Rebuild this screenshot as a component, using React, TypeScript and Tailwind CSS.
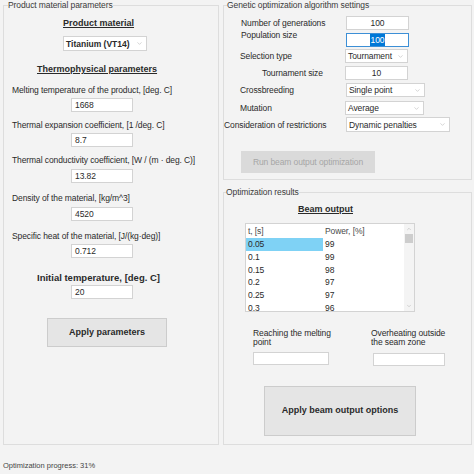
import { ChevronDown, ChevronUp } from "lucide-react";

const txt = "text-[8.5px] leading-[12px] tracking-[-0.1px]";
const boxCls = "bg-white border border-[#d3d3d3]";

function Select({ value, className = "", bold = false }: { value: string; className?: string; bold?: boolean }) {
  return (
    <div className={`flex items-center justify-between pl-[2px] pr-[3px] ${boxCls} ${className}`}>
      <span className={bold ? "whitespace-nowrap text-[8.5px] font-bold leading-[12px]" : `whitespace-nowrap ${txt}`}>{value}</span>
      <ChevronDown size={7} strokeWidth={1.5} className="shrink-0 text-[#a0a0a0]" />
    </div>
  );
}

function LeftField({ label, value, labelMt, inputMt }: { label: string; value: string; labelMt: string; inputMt: string }) {
  return (
    <>
      <div className={`ml-[8px] h-[12px] ${txt} ${labelMt}`}>{label}</div>
      <div className={`ml-[67px] h-[14px] w-[62px] pl-[3px] ${boxCls} ${txt} ${inputMt}`}>{value}</div>
    </>
  );
}

function Row({ label, pl, mt, children, h = "h-[14px]", labelUp = false }: { label: string; pl: string; mt: string; children: React.ReactNode; h?: string; labelUp?: boolean }) {
  return (
    <div className={`flex ${labelUp ? "items-start" : "items-center"} ${h} ${mt}`}>
      <div className={`w-[121px] shrink-0 whitespace-nowrap ${pl} ${txt} ${labelUp ? "-mt-[4px]" : ""}`}>{label}</div>
      {children}
    </div>
  );
}

const rows = [
  ["0.05", "99"],
  ["0.1", "99"],
  ["0.15", "98"],
  ["0.2", "97"],
  ["0.25", "97"],
  ["0.3", "96"],
];

export default function App() {
  return (
    <div className="flex h-[474px] w-[474px] flex-col overflow-hidden bg-[#f3f3f3] font-['Liberation_Sans',Arial,sans-serif] text-[#2a2a2a]">
      <div className="flex h-[445px]">
        {/* Product material parameters */}
        <fieldset className="ml-[3px] h-full w-[216px] border border-[#dddddd]">
          <legend className="ml-[4px] text-[8.5px] leading-[11px] tracking-[-0.1px] text-[#3a3a3a]">Product material parameters</legend>
          <div className="ml-[59px] mt-[6px] h-[12px] text-[9px] font-bold leading-[12px] underline">Product material</div>
          <Select value="Titanium (VT14)" bold className="ml-[59px] mt-[7px] h-[15px] w-[84px]" />
          <div className="ml-[33px] mt-[12px] h-[12px] text-[9px] font-bold leading-[12px] underline">Thermophysical parameters</div>
          <LeftField label="Melting temperature of the product, [deg. C]" value="1668" labelMt="mt-[9px]" inputMt="mt-[2px]" />
          <LeftField label="Thermal expansion coefficient, [1 /deg. C]" value="8.7" labelMt="mt-[7px]" inputMt="mt-[2px]" />
          <LeftField label="Thermal conductivity coefficient, [W / (m · deg. C)]" value="13.82" labelMt="mt-[7px]" inputMt="mt-[3px]" />
          <LeftField label="Density of the material, [kg/m^3]" value="4520" labelMt="mt-[9px]" inputMt="mt-[3px]" />
          <LeftField label="Specific heat of the material, [J/(kg·deg)]" value="0.712" labelMt="mt-[9px]" inputMt="mt-[2px]" />
          <div className="ml-[33px] mt-[13px] h-[14px] text-[9.5px] font-bold leading-[14px]">Initial temperature, [deg. C]</div>
          <div className={`ml-[67px] h-[14px] w-[62px] pl-[3px] ${boxCls} ${txt}`}>20</div>
          <button className="ml-[43px] mt-[19px] flex h-[29px] w-[120px] items-center justify-center border border-[#cccccc] bg-[#e5e5e5] text-[9px] font-bold">
            Apply parameters
          </button>
        </fieldset>

        <div className="ml-[4px] flex w-[249px] flex-col">
          {/* Genetic optimization algorithm settings */}
          <fieldset className="h-[180px] border border-[#dddddd]">
            <legend className="ml-[3px] text-[8.5px] leading-[11px] tracking-[-0.1px] text-[#3a3a3a]">Genetic optimization algorithm settings</legend>
            <Row label="Number of generations" pl="pl-[17px]" mt="mt-[5px]">
              <div className={`ml-[1px] h-[14px] w-[63px] text-center ${boxCls} ${txt}`}>100</div>
            </Row>
            <Row label="Population size" pl="pl-[17px]" mt="mt-[3px]" labelUp>
              <div className="ml-[1px] flex h-[14px] w-[63px] items-center justify-center border border-[#3c8fd6] bg-white">
                <span className={`bg-[#0078d7] px-[1px] text-white ${txt} leading-[10px]`}>100</span>
              </div>
            </Row>
            <Row label="Selection type" pl="pl-[16px]" mt="mt-[2px]">
              <Select value="Tournament" className="h-[14px] w-[63px]" />
            </Row>
            <Row label="Tournament size" pl="pl-[38px]" mt="mt-[3px]">
              <div className={`h-[14px] w-[63px] text-center ${boxCls} ${txt}`}>10</div>
            </Row>
            <Row label="Crossbreeding" pl="pl-[16px]" mt="mt-[3px]">
              <Select value="Single point" className="ml-[1px] h-[14px] w-[79px]" />
            </Row>
            <Row label="Mutation" pl="pl-[16px]" mt="mt-[4px]">
              <Select value="Average" className="h-[14px] w-[79px]" />
            </Row>
            <Row label="Consideration of restrictions" pl="pl-0" mt="mt-[2px]" h="h-[15px]">
              <Select value="Dynamic penalties" className="ml-[1px] h-[15px] w-[104px]" />
            </Row>
            <button className={`ml-[17px] mt-[19px] flex h-[22px] w-[134px] items-center justify-center bg-[#dadada] text-[#a6a6a6] ${txt}`}>
              Run beam output optimization
            </button>
          </fieldset>

          {/* Optimization results */}
          <fieldset className="mt-[7px] flex-1 border border-[#dddddd]">
            <legend className="ml-[2px] text-[8.5px] leading-[11px] tracking-[-0.1px] text-[#3a3a3a]">Optimization results</legend>
            <div className="ml-[74px] mt-[5px] h-[12px] text-[9px] font-bold leading-[12px] underline">Beam output</div>
            <div className={`ml-[21px] mt-[8px] flex h-[89px] w-[170px] overflow-hidden ${boxCls}`}>
              <div className="flex-1">
                <div className={`flex h-[14px] items-center text-[#4a4a4a] ${txt}`}>
                  <div className="w-[77px] pl-[2px]">t, [s]</div>
                  <div className="pl-[2px]">Power, [%]</div>
                </div>
                {rows.map(([t, p], i) => (
                  <div key={t} className={`flex h-[12.8px] items-center ${txt}`}>
                    <div className={`h-full w-[77px] pl-[2px] leading-[12.8px] ${i === 0 ? "bg-[#7fd2f5]" : ""}`}>{t}</div>
                    <div className="pl-[2px] leading-[12.8px]">{p}</div>
                  </div>
                ))}
              </div>
              <div className="flex w-[10px] flex-col bg-[#f4f4f4]">
                <div className="flex h-[10px] items-center justify-center">
                  <ChevronUp size={6} strokeWidth={1.5} className="text-[#9a9a9a]" />
                </div>
                <div className="mx-[1px] h-[9px] bg-[#cdcdcd]" />
                <div className="flex-1" />
                <div className="flex h-[10px] items-center justify-center">
                  <ChevronDown size={6} strokeWidth={1.5} className="text-[#9a9a9a]" />
                </div>
              </div>
            </div>
            <div className="mt-[17px] flex">
              <div className="ml-[29px] w-[118px]">
                <div className="text-[8.5px] leading-[9px] tracking-[-0.1px]">
                  Reaching the melting
                  <br />
                  point
                </div>
                <div className={`mt-[5px] h-[13px] w-[76px] ${boxCls}`} />
              </div>
              <div>
                <div className="text-[8.5px] leading-[9px] tracking-[-0.1px]">
                  Overheating outside
                  <br />
                  the seam zone
                </div>
                <div className={`ml-[2px] mt-[6px] h-[13px] w-[72px] ${boxCls}`} />
              </div>
            </div>
            <button className="ml-[40px] mt-[20px] flex h-[50px] w-[152px] items-center justify-center border border-[#cccccc] bg-[#e5e5e5] text-[9px] font-bold">
              Apply beam output options
            </button>
          </fieldset>
        </div>
      </div>
      <div className="h-[29px] pl-[3px] pt-[16px] text-[7.5px] leading-[10px] text-[#444444]">Optimization progress: 31%</div>
    </div>
  );
}
